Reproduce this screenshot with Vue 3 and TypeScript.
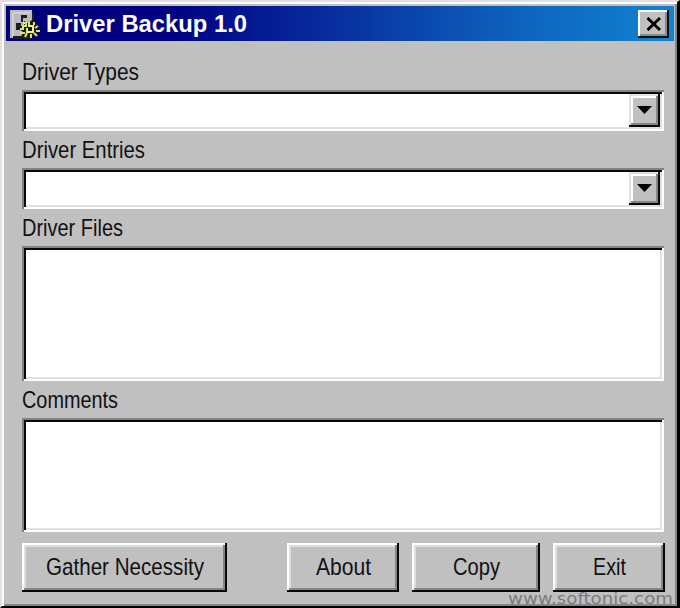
<script setup lang="ts">
interface Field {
  label: string
  width: number
  kind: 'combo' | 'list' | 'memo'
}

interface Action {
  label: string
  width: number
  kind: string
}

const fields: Field[] = [
  { label: 'Driver Types', width: 117, kind: 'combo' },
  { label: 'Driver Entries', width: 123, kind: 'combo' },
  { label: 'Driver Files', width: 101, kind: 'list' },
  { label: 'Comments', width: 96, kind: 'memo' },
]

const actions: Action[] = [
  { label: 'Gather Necessity', width: 158, kind: 'gather' },
  { label: 'About', width: 55, kind: 'about' },
  { label: 'Copy', width: 47, kind: 'copy' },
  { label: 'Exit', width: 33, kind: 'exit' },
]
</script>

<template>
  <main class="window">
    <header class="titlebar">
      <svg class="app-icon" width="32" height="32" viewBox="0 0 32 32">
        <path d="M1 2h22v28H1z" fill="#b9bbbd" />
        <path d="M3 4h18v2H5v22H3z" fill="#cfd0d2" />
        <path d="M12 7h6v3h-4v4h-2zM7 15h5v3h2v4H7zM23 4h2v10h-2zM4 28h18v3H4z" fill="#1c1c24" />
        <path d="M15 13l4 2 4-3 3 4 3-1-2 4 4 3-3 2v5l-4-2-4 3-3-3-5 2 2-5-4-3 5-2z" fill="#18200b" />
        <path d="M14 15h3v3h-3v3h-3M20 14v3M25 14v3M29 18l-3 2M31 23h-4M28 28l-3-3M22 30v-4M16 29l2-4M11 25h5" fill="none" stroke="#dfe36a" stroke-width="2" />
        <path d="M19 18h5v6h-6v-4" fill="none" stroke="#eef08e" stroke-width="2" />
        <path d="M20 19h2v3h-2z" fill="#17172b" />
      </svg>
      <svg class="title" width="204" height="32">
        <text x="1" y="24" textLength="201" lengthAdjust="spacingAndGlyphs">Driver Backup 1.0</text>
      </svg>
      <button class="close" aria-label="Close">
        <svg width="16" height="14" viewBox="0 0 16 14">
          <path d="M1.5 1L14 13M14 1L1.5 13" stroke="#000" stroke-width="3" />
        </svg>
      </button>
    </header>

    <section class="content">
      <div v-for="field in fields" :key="field.label" class="group" :class="field.kind">
        <svg class="label" width="150" height="28">
          <text x="1" y="19" :textLength="field.width" lengthAdjust="spacingAndGlyphs">{{ field.label }}</text>
        </svg>
        <div class="well">
          <div class="inner">
            <button v-if="field.kind === 'combo'" class="drop" aria-label="Open list">
              <svg width="15" height="8" viewBox="0 0 15 8"><path d="M0 0h15L7.5 8z" /></svg>
            </button>
          </div>
        </div>
      </div>

      <footer class="actions">
        <button v-for="action in actions" :key="action.label" class="action" :class="action.kind">
          <svg :width="action.width" height="30">
            <text x="0" y="22" :textLength="action.width" lengthAdjust="spacingAndGlyphs">{{ action.label }}</text>
          </svg>
        </button>
      </footer>
    </section>

    <svg class="watermark" width="170" height="20">
      <text x="1" y="15" textLength="165" lengthAdjust="spacingAndGlyphs">www.softonic.com</text>
    </svg>
  </main>
</template>

<style>
body {
  margin: 0;
  overflow: hidden;
}
</style>

<style scoped>
* {
  box-sizing: border-box;
}

.window {
  position: relative;
  width: 680px;
  height: 608px;
  padding: 4px 3px 0 4px;
  background: #c0c0c0;
  border: 2px solid #e0e0e0;
  border-right: 3px solid #000;
  border-bottom: 2px solid #000;
  box-shadow: inset 2px 2px #fff, inset -2px -2px #858585;
  font-family: "Liberation Sans", Arial, sans-serif;
}

svg {
  display: block;
  flex: none;
  overflow: visible;
}

button {
  display: flex;
  flex: none;
  align-items: center;
  justify-content: center;
  padding: 0;
  border: 0;
  border-radius: 0;
  background: #c0c0c0;
}

.titlebar {
  display: flex;
  align-items: center;
  height: 35px;
  padding: 0 5px 0 3px;
  background: linear-gradient(90deg, #00007b 0%, #000083 24%, #0830a0 50%, #0d60bc 75%, #1084d0 100%);
}

.title {
  margin-left: 4px;
}

.title text {
  fill: #fff;
  font-size: 24px;
  font-weight: bold;
}

.close {
  width: 31px;
  height: 28px;
  margin-left: auto;
  box-shadow: inset -2px -2px #111, inset 2px 2px #fff, inset -4px -4px #898989;
}

.content {
  padding: 20px 10px 0 16px;
}

.group {
  height: 78px;
}

.group.list {
  height: 172px;
}

.group.memo {
  height: 154px;
}

.label text,
.action text {
  fill: #111;
  font-size: 24px;
}

.label {
  margin-left: -1px;
}

.well {
  height: 41px;
  padding: 4px;
  margin-top: 1px;
  background: #fff;
  box-shadow: inset 2px 2px #828282, inset -2px -2px #fff, inset 4px 4px #080808, inset -4px -4px #e0e0e0;
}

.list .well {
  height: 135px;
}

.memo .well {
  height: 114px;
}

.inner {
  display: flex;
  justify-content: flex-end;
  height: 100%;
}

.drop {
  width: 31px;
  height: 33px;
  padding-bottom: 2px;
  box-shadow: inset -2px -2px #090909, inset 2px 2px #e0e0e0, inset -4px -4px #858585, inset 4px 4px #fff;
}

.actions {
  display: flex;
  height: 49px;
}

.action {
  width: 112px;
  height: 49px;
  box-shadow: inset -2px -2px #080808, inset 2px 2px #fff, inset -4px -4px #858585, inset 4px 4px #dedede;
}

.action.gather {
  width: 205px;
  margin-right: 60px;
}

.action.copy {
  width: 128px;
  margin: 0 13px;
}

.watermark {
  position: absolute;
  right: 0;
  bottom: -3px;
}

.watermark text {
  fill: #7b7b7b;
  font-family: "DejaVu Sans", sans-serif;
  font-size: 16px;
}
</style>
